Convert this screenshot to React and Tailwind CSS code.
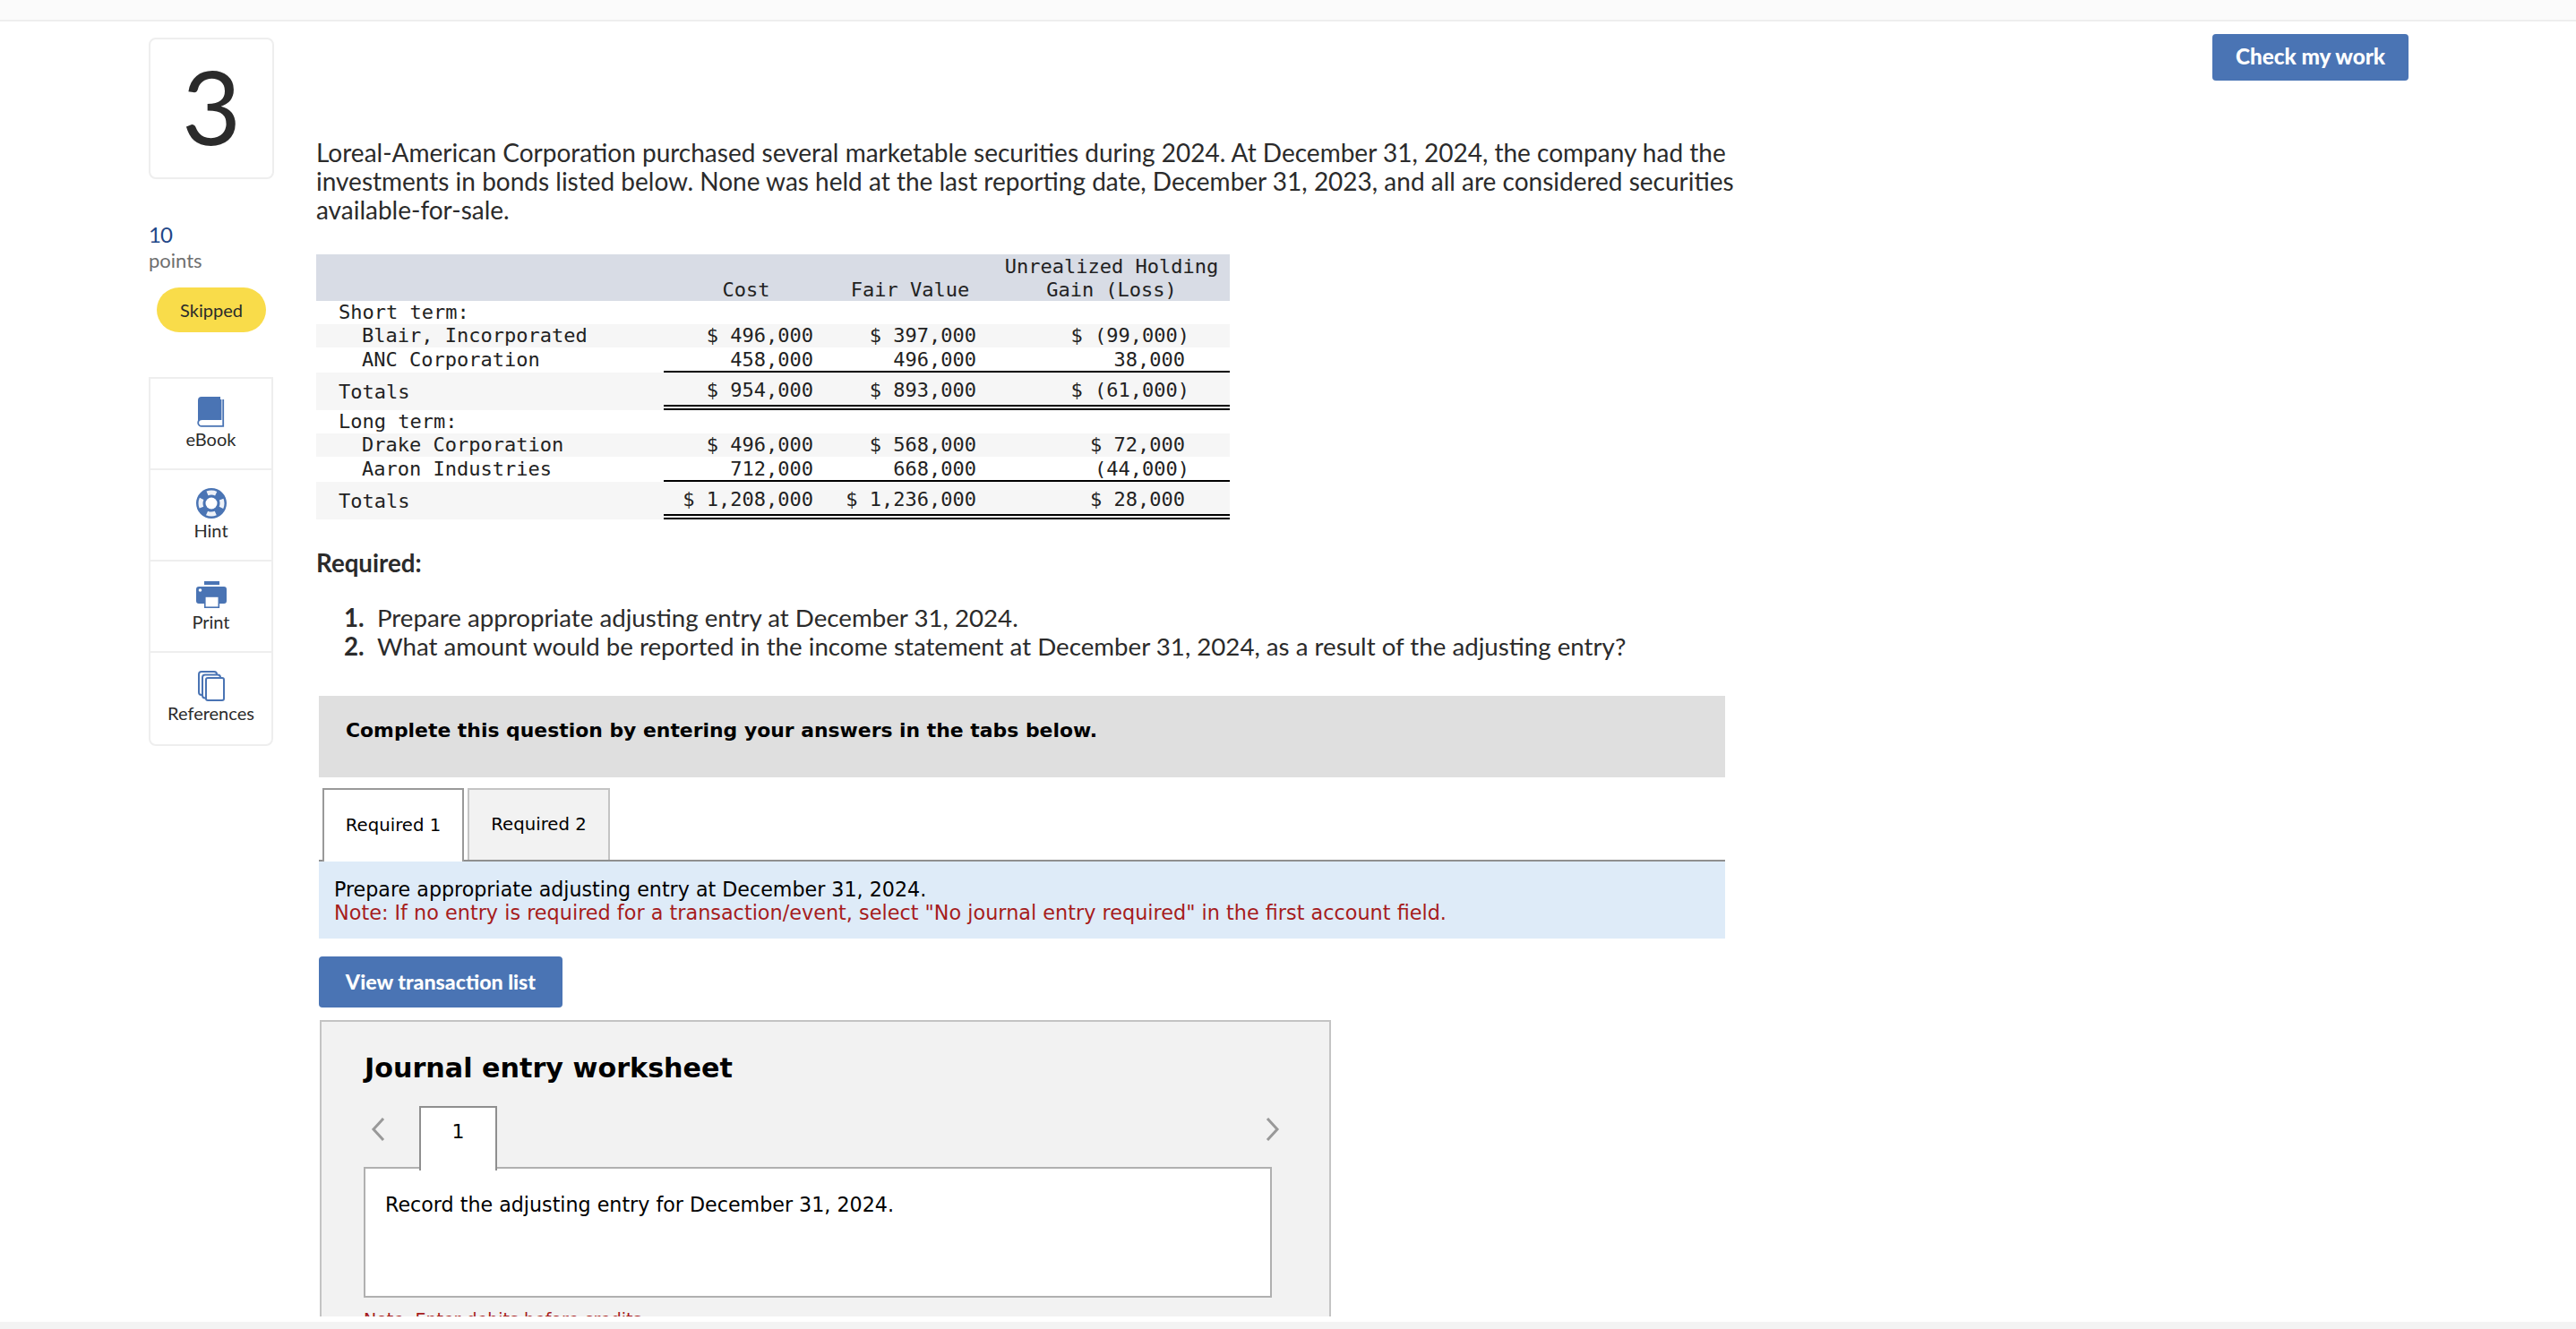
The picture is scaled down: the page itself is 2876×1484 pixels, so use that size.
import React from "react";

const sideItems = [
  { label: "eBook", icon: "book" },
  { label: "Hint", icon: "hint" },
  { label: "Print", icon: "print" },
  { label: "References", icon: "refs" },
];

const SideIcon = ({ name }) => {
  if (name === "book") {
    return (
      <svg width="32" height="34" viewBox="0 0 32 34" fill="none">
        <path d="M5 0h21v25H5a4 4 0 0 0-4 3V4a4 4 0 0 1 4-4z" fill="#4a74b4" />
        <path d="M29.200 3v29.800H6a3.800 3.800 0 0 1-4.800-3.800c0-2.200 2-3.800 4.800-3.800h20.500V3" stroke="#4a74b4" strokeWidth="1.800" />
      </svg>
    );
  }
  if (name === "hint") {
    return (
      <svg width="34" height="34" viewBox="0 0 34 34" fill="none">
        <circle cx="17" cy="17" r="17" fill="#4a74b4" />
        <circle cx="17" cy="17" r="6.500" fill="#fff" />
        <circle cx="17" cy="17" r="12" stroke="#fff" strokeOpacity="0.9" strokeWidth="5" strokeDasharray="10 8.850" strokeDashoffset="5" />
      </svg>
    );
  }
  if (name === "print") {
    return (
      <svg width="34" height="30" viewBox="0 0 34 30">
        <rect x="9" y="0" width="17" height="4" fill="#4a74b4" />
        <path d="M3 6h28a3 3 0 0 1 3 3v13a3 3 0 0 1-3 3h-6v-8H9v8H3a3 3 0 0 1-3-3V9a3 3 0 0 1 3-3z" fill="#4a74b4" />
        <circle cx="4.500" cy="10" r="1.800" fill="#fff" />
        <rect x="9.800" y="17" width="15.500" height="12.200" fill="#fff" stroke="#4a74b4" strokeWidth="1.600" />
      </svg>
    );
  }
  return (
    <svg width="30" height="34" viewBox="0 0 30 34" fill="#fff" stroke="#4a74b4" strokeWidth="2">
      <rect x="1" y="1" width="20" height="26" rx="3" />
      <rect x="5" y="4.500" width="20" height="26" rx="3" />
      <rect x="9" y="8" width="20" height="25" rx="2" />
    </svg>
  );
};

const Sidebar = () => (
  <aside className="w-[186px] shrink-0 pl-[166px] box-content font-['Lato',sans-serif]">
    <div className="w-[140px] h-[158px] mt-[18px] pb-[6px] border-2 border-[#eeeeee] rounded-lg flex items-center justify-center text-[114px] leading-none text-[#2b2b2b]">
      3
    </div>
    <div className="mt-[47px] text-[24px] leading-[30px] tracking-[-1px] text-[#1f4788]">10</div>
    <div className="text-[22px] leading-[28px] text-[#6f6f6f]">points</div>
    <div className="ml-[9px] mt-[16px] w-[122px] h-[50px] rounded-full bg-[#f9dc4a] flex items-center justify-center text-[20px] text-[#2b2b2b]">
      Skipped
    </div>
    <div className="mt-[50px] w-[139px] border-2 border-[#eeeeee] rounded-b-lg">
      {sideItems.map((item, i) => (
        <div
          key={item.label}
          className={`h-[102px] flex flex-col items-center pt-[20px] text-[20px] leading-[24px] text-[#2b2b2b] ${i < 3 ? "border-b-2 border-[#eeeeee]" : ""}`}
        >
          <div className="h-[34px] flex items-center justify-center mb-[1px]">
            <SideIcon name={item.icon} />
          </div>
          {item.label}
        </div>
      ))}
    </div>
  </aside>
);

const rows = [
  { name: "Short term:", indent: false },
  { name: "Blair, Incorporated", indent: true, shade: true, a: "$ 496,000", b: "$ 397,000", c: "$ (99,000)", cParen: true },
  { name: "ANC Corporation", indent: true, a: "458,000", b: "496,000", c: "38,000", rule: "single" },
  { name: "Totals", total: true, shade: true, a: "$ 954,000", b: "$ 893,000", c: "$ (61,000)", cParen: true },
  { name: "Long term:", indent: false },
  { name: "Drake Corporation", indent: true, shade: true, a: "$ 496,000", b: "$ 568,000", c: "$ 72,000" },
  { name: "Aaron Industries", indent: true, a: "712,000", b: "668,000", c: "(44,000)", cParen: true, rule: "single" },
  { name: "Totals", total: true, shade: true, a: "$ 1,208,000", b: "$ 1,236,000", c: "$ 28,000" },
];

const BondRow = ({ row }) => {
  const bg = row.shade ? "bg-[#f6f6f6]" : "";
  const rule = row.rule === "single" ? "border-b-2 border-black pt-[1px]" : "";
  const dbl = row.total ? "border-b-[6px] border-double border-black pt-[7px]" : "";
  const h = row.total ? "h-[42px]" : row.rule ? "h-[28px]" : "h-[26px]";
  const namePad = row.total ? "pt-[9px]" : row.rule ? "pt-[1px]" : "";
  return (
    <div className={`flex ${bg} ${h}`}>
      <div className={`w-[388px] ${row.indent ? "pl-[51px]" : "pl-[25px]"} ${namePad}`}>{row.name}</div>
      <div className={`flex flex-1 ${rule} ${dbl}`}>
        <div className="w-[184px] text-right pr-[17px]">{row.a}</div>
        <div className="w-[182px] text-right pr-[17px]">{row.b}</div>
        <div className={`flex-1 text-right ${row.cParen ? "pr-[45px]" : "pr-[50px]"}`}>{row.c}</div>
      </div>
    </div>
  );
};

const BondTable = () => (
  <div className="mt-[34px] w-[1020px] ml-[1px] font-['DejaVu_Sans_Mono',monospace] text-[22px] leading-[26px] text-[#222222] whitespace-pre">
    <div className="flex h-[52px] bg-[#d8dce5] pt-[1px]">
      <div className="w-[388px]" />
      <div className="w-[184px] text-center mt-[26px]">Cost</div>
      <div className="w-[182px] text-center mt-[26px]">Fair Value</div>
      <div className="flex-1 text-center pl-[2px]">
        Unrealized Holding
        <br />
        Gain (Loss)
      </div>
    </div>
    {rows.map((row, i) => (
      <BondRow key={i} row={row} />
    ))}
  </div>
);

const Main = () => (
  <main className="w-[1600px] pt-[130px] shrink-0">
    <div className="font-['Lato',sans-serif] text-[#2b2b2b]">
      <p className="w-[1590px] ml-[1px] text-[28px] leading-[32px]">
        Loreal-American Corporation purchased several marketable securities during 2024. At December 31, 2024, the company had the investments in bonds listed below. None was held at the last reporting date, December 31, 2023, and all are considered securities available-for-sale.
      </p>
    </div>
    <BondTable />
    <div className="font-['Lato',sans-serif] text-[#2b2b2b] text-[27.700px] leading-[32px]">
      <div className="mt-[33px] ml-[1px] font-bold">Required:</div>
      <div className="mt-[29px] ml-[32px] flex flex-col">
        <div className="flex"><span className="w-[37px] font-bold">1.</span>Prepare appropriate adjusting entry at December 31, 2024.</div>
        <div className="flex"><span className="w-[37px] font-bold">2.</span>What amount would be reported in the income statement at December 31, 2024, as a result of the adjusting entry?</div>
      </div>
    </div>
    <div className="font-['DejaVu_Sans',sans-serif]">
      <div className="mt-[39px] ml-[4px] w-[1570px] h-[91px] bg-[#dfdfdf] pl-[30px] pt-[25px] font-bold text-[21.900px] leading-[28px] text-black">
        Complete this question by entering your answers in the tabs below.
      </div>
      <div className="ml-[4px] w-[1570px] mt-[12px] flex items-end h-[82px] border-b-2 border-[#8f8f8f] pl-[4px] gap-[4px] text-[19.700px]">
        <div className="relative -mb-[2px] w-[158px] h-[82px] bg-white border-2 border-b-0 border-[#999999] flex items-center justify-center text-black">Required 1</div>
        <div className="w-[159px] h-[80px] bg-[#f2f2f2] border-2 border-b-0 border-[#c4c4c4] flex items-center justify-center text-black">Required 2</div>
      </div>
      <div className="ml-[4px] w-[1570px] h-[86px] bg-[#deebf8] pl-[17px] pt-[18px] text-[22.200px] leading-[26px]">
        <div className="text-black">Prepare appropriate adjusting entry at December 31, 2024.</div>
        <div className="text-[#a61c1c] text-[22.350px]">Note: If no entry is required for a transaction/event, select "No journal entry required" in the first account field.</div>
      </div>
      <button className="block mt-[20px] ml-[4px] w-[272px] h-[57px] rounded bg-[#4a74b4] text-white font-black text-[23.200px] font-['Lato',sans-serif]">View transaction list</button>
      <div className="mt-[14px] ml-[5px] w-[1129px] h-[331px] overflow-hidden bg-[#f2f2f2] border-2 border-b-0 border-[#c4c4c4] pl-[47px] pr-[64px]">
        <h2 className="mt-[33px] ml-[1px] font-bold text-[30.200px] leading-[38px] text-black">Journal entry worksheet</h2>
        <div className="mt-[23px] relative h-[68px]">
          <svg className="absolute left-[7px] top-[13px]" width="18" height="26" viewBox="0 0 18 26" fill="none" stroke="#999999" strokeWidth="3"><path d="M15 1 4 13l11 12" /></svg>
          <svg className="absolute right-[-10px] top-[13px]" width="18" height="26" viewBox="0 0 18 26" fill="none" stroke="#999999" strokeWidth="3"><path d="m3 1 11 12L3 25" /></svg>
          <div className="absolute left-[62px] top-0 z-10 w-[87px] h-[72px] pt-[13px] bg-white border-2 border-b-0 border-[#8f8f8f] text-center text-[22px] leading-[28px] text-black">1</div>
        </div>
        <div className="h-[146px] bg-white border-2 border-[#b0b0b0] pl-[22px] pt-[26px] text-[22.200px] leading-[28px] text-black">
          Record the adjusting entry for December 31, 2024.
        </div>
        <div className="mt-[11px] text-[19px] leading-[26px] text-[#a61c1c]">Note: Enter debits before credits.</div>
      </div>
    </div>
  </main>
);

export default function App() {
  return (
    <div className="w-[2876px] h-[1484px] overflow-hidden bg-white relative flex flex-col">
      <div className="h-[24px] shrink-0 bg-[#fbfbfb] border-b-2 border-[#eeeeee]" />
      <div className="flex flex-1 min-h-0">
        <Sidebar />
        <Main />
        <div className="flex-1 pt-[14px] pl-[518px]">
          <button className="w-[219px] h-[52px] pb-[2px] rounded bg-[#4a74b4] text-white font-black text-[24.300px] font-['Lato',sans-serif]">Check my work</button>
        </div>
      </div>
      <div className="h-[8px] shrink-0 bg-[#f3f3f3]" />
    </div>
  );
}
